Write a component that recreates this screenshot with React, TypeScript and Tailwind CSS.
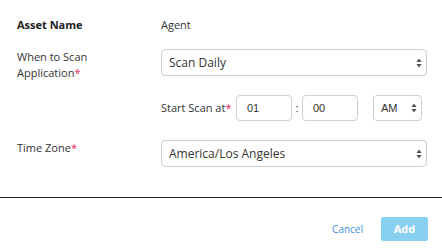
import React from "react";

function Arrows() {
  return (
    <svg width="6" height="10" viewBox="0 0 6 10" className="shrink-0">
      <path d="M3 0.5 L5.6 4 H0.4 Z" fill="#555" />
      <path d="M3 9.5 L5.6 6 H0.4 Z" fill="#555" />
    </svg>
  );
}

function SelectBox({ value, className = "" }: { value: string; className?: string }) {
  return (
    <div
      className={`flex items-center justify-between rounded-[4px] border border-[#cfcfcf] bg-white pl-[7px] pr-[4px] ${className}`}
    >
      <span className="text-[12px] text-[#333]">{value}</span>
      <Arrows />
    </div>
  );
}

function Req() {
  return <span className="text-[#e8265a]">*</span>;
}

const arial = { fontFamily: '"Liberation Sans", Arial, sans-serif' };

export default function App() {
  return (
    <div
      className="flex h-[251px] w-[442px] flex-col bg-white text-[#333]"
      style={{ fontFamily: '"Open Sans", sans-serif' }}
    >
      <div className="flex shrink-0 flex-col pl-[17px] pr-[15px]">
        <div className="mt-[17px] grid grid-cols-[144px_1fr] text-[11px] leading-[16px]">
          <div className="font-bold text-[#222]">Asset Name</div>
          <div>Agent</div>
        </div>

        <div className="mt-[16px] grid grid-cols-[144px_1fr] text-[11px] leading-[16px]">
          <div>
            When to Scan
            <br />
            Application
            <Req />
          </div>
          <SelectBox value="Scan Daily" className="h-[27px] w-[266px]" />
        </div>

        <div className="mt-[14px] flex items-center pl-[144px] text-[11px]">
          <span className="w-[75px] whitespace-nowrap">
            Start Scan at
            <Req />
          </span>
          <div
            className="flex h-[26px] w-[56px] items-center rounded-[4px] border border-[#cfcfcf] pl-[10px] text-[11px]"
            style={arial}
          >
            01
          </div>
          <span className="w-[10px] text-center text-[11px]" style={arial}>
            :
          </span>
          <div
            className="flex h-[26px] w-[56px] items-center rounded-[4px] border border-[#cfcfcf] pl-[10px] text-[11px]"
            style={arial}
          >
            00
          </div>
          <div
            className="ml-[15px] flex h-[26px] w-[49px] items-center justify-between rounded-[4px] border border-[#cfcfcf] pl-[7px] pr-[4px] text-[11px]"
            style={arial}
          >
            <span>AM</span>
            <Arrows />
          </div>
        </div>

        <div className="mt-[19px] grid grid-cols-[144px_1fr] text-[11px] leading-[16px]">
          <div>
            Time Zone
            <Req />
          </div>
          <SelectBox value="America/Los Angeles" className="h-[27px] w-[266px]" />
        </div>
      </div>

      <div className="mt-[30px] h-px w-full shrink-0 bg-[#1f2a33]" />

      <div className="mt-[19px] flex shrink-0 items-center justify-end pr-[14px]">
        <span className="mr-[18px] text-[10px] text-[#3b8fd9]">Cancel</span>
        <div className="flex h-[24px] w-[47px] items-center justify-center rounded-[2px] bg-[#88d0f0] text-[11px] font-bold text-white">
          Add
        </div>
      </div>
    </div>
  );
}
